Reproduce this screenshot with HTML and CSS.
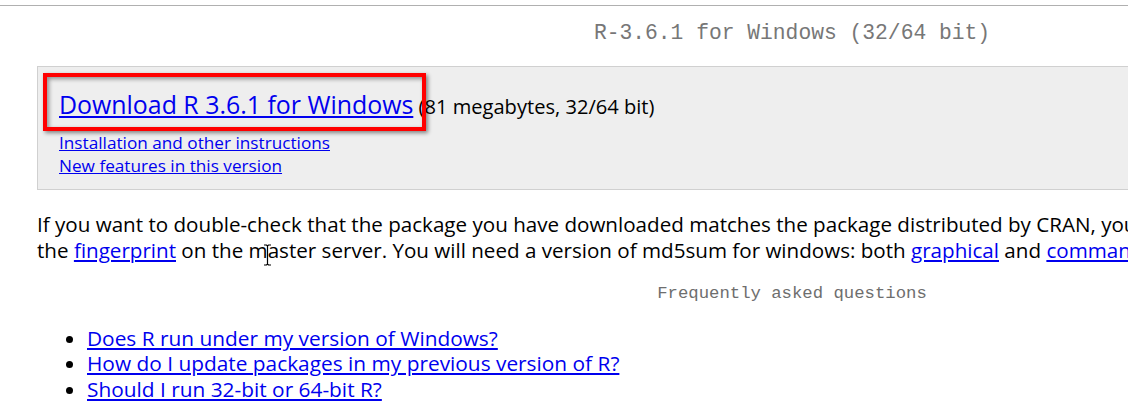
FILE: index.html
```html
<!DOCTYPE html>
<html lang="en">
<head>
<meta charset="utf-8">
<title>R-3.6.1 for Windows</title>
<link rel="stylesheet" href="styles.css">
</head>
<body>
<div class="page">
  <div class="rule"></div>
  <h1 class="title">R-3.6.1 for Windows (32/64 bit)</h1>
  <div class="box">
    <p class="dl"><a class="big" href="#">Download R 3.6.1 for Windows</a> (81 megabytes, 32/64 bit)</p>
    <div class="links">
      <a href="#">Installation and other instructions</a><br>
      <a href="#">New features in this version</a>
    </div>
    <div class="highlight"></div>
  </div>
  <p class="text">If you want to double-check that the package you have downloaded matches the package distributed by CRAN, you can compare the md5sum of the .exe to<br>the <a href="#">fingerprint</a> on the master server. You will need a version of md5sum for windows: both <a href="#">graphical</a> and <a href="#">command line versions</a> are available.</p>
  <h2 class="faq">Frequently asked questions</h2>
  <ul class="list">
    <li><a href="#">Does R run under my version of Windows?</a></li>
    <li><a href="#">How do I update packages in my previous version of R?</a></li>
    <li><a href="#">Should I run 32-bit or 64-bit R?</a></li>
  </ul>
  <svg class="cursor" width="9" height="22" viewBox="0 0 9 22"><path d="M1 1h2.5l1 1 1-1H8M4.5 2v18M1 21h2.5l1-1 1 1H8" fill="none" stroke="#000" stroke-width="1.2"/></svg>
</div>
</body>
</html>
```
FILE: styles.css
```css
html, body {
  margin: 0;
  padding: 0;
  overflow: hidden;
  background: #fff;
}
.page {
  position: relative;
  width: 1584px;
  box-sizing: border-box;
  padding: 5px 37px 0 37px;
  font-family: "Open Sans", "Noto Sans", sans-serif;
  color: #000;
}
.page a {
  color: #0000ee;
  text-decoration: underline;
}
.rule {
  height: 1px;
  background: #b0b0b0;
  margin: 0 -37px;
}
.title {
  margin: 14px 0 0 0;
  font-family: "Liberation Mono", monospace;
  font-weight: normal;
  font-size: 21.3px;
  line-height: 26px;
  color: #777777;
  text-align: center;
}
.box {
  position: relative;
  margin-top: 20px;
  background: #eeeeee;
  border: 1px solid #d0d0d0;
  padding: 15px 21px 12px 21px;
}
.dl {
  margin: 0 0 2px 0;
  line-height: 44px;
  font-size: 20.1px;
  white-space: nowrap;
}
.dl .big {
  font-size: 24.9px;
}
.links {
  font-size: 17.2px;
  line-height: 23px;
}
.highlight {
  position: absolute;
  left: 5px;
  top: 6px;
  width: 375px;
  height: 50px;
  border: 4px solid #ff0000;
  box-shadow: 2px 2px 4px rgba(0, 0, 0, 0.45), inset 2px 2px 4px rgba(0, 0, 0, 0.4);
}
.text {
  margin: 21px 0 0 0;
  font-size: 20.6px;
  line-height: 26px;
  white-space: nowrap;
}
.faq {
  margin: 19px 0 0 0;
  font-family: "Liberation Mono", monospace;
  font-weight: normal;
  font-size: 17.3px;
  line-height: 24px;
  color: #6e6e6e;
  text-align: center;
}
.list {
  margin: 20px 0 0 0;
  padding-left: 50px;
  font-size: 20.85px;
  line-height: 25.3px;
}
.cursor {
  position: absolute;
  left: 263px;
  top: 244px;
}
```
